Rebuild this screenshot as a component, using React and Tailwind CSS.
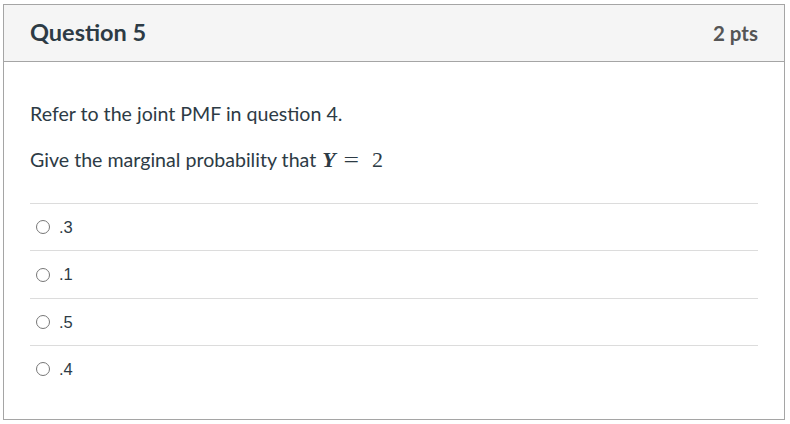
import React from 'react';

const answers = ['.3', '.1', '.5', '.4'];

const App = () => {
  return (
    <div className="w-[790px] h-[424px] bg-white pt-[4px] pl-[3px]">
      <div className="w-[782px] h-[416px] border border-[#a5a5a5] flex flex-col">
        <div className="h-[57px] bg-[#f5f5f5] border-b border-[#a5a5a5] flex justify-between items-center px-[26px] font-['Lato',sans-serif] font-bold">
          <h2 className="text-[23.5px] text-[#2d3b45]">Question 5</h2>
          <span className="text-[20.5px] text-[#555]">2 pts</span>
        </div>
        <div className="px-[26px] pt-[40px] font-['Lato',sans-serif] text-[19.6px] text-[#2d3b45]">
          <p className="leading-[24px]">Refer to the joint PMF in question 4.</p>
          <p className="mt-[22px] leading-[24px] flex items-baseline">
            <span>Give the marginal probability that</span>
            <span className="font-['Liberation_Serif',serif] italic font-bold text-[22px] ml-[6px]">Y</span>
            <span className="font-['Liberation_Serif',serif] text-[22px] ml-[9px] mr-[15px] inline-block scale-x-125">=</span>
            <span className="font-['Liberation_Serif',serif] text-[22px]">2</span>
          </p>
          <div className="mt-[31px]">
            {answers.map((a) => (
              <div key={a} className="border-t border-[#dcdcdc] h-[47.4px] flex items-center">
                <span className="w-[14px] h-[14px] rounded-full border border-[#777] ml-[6px] mr-[9px] bg-white" />
                <span className="font-['Liberation_Sans',sans-serif] text-[16.5px] text-[#2d3b45]">{a}</span>
              </div>
            ))}
          </div>
        </div>
      </div>
    </div>
  );
};

export default App;
